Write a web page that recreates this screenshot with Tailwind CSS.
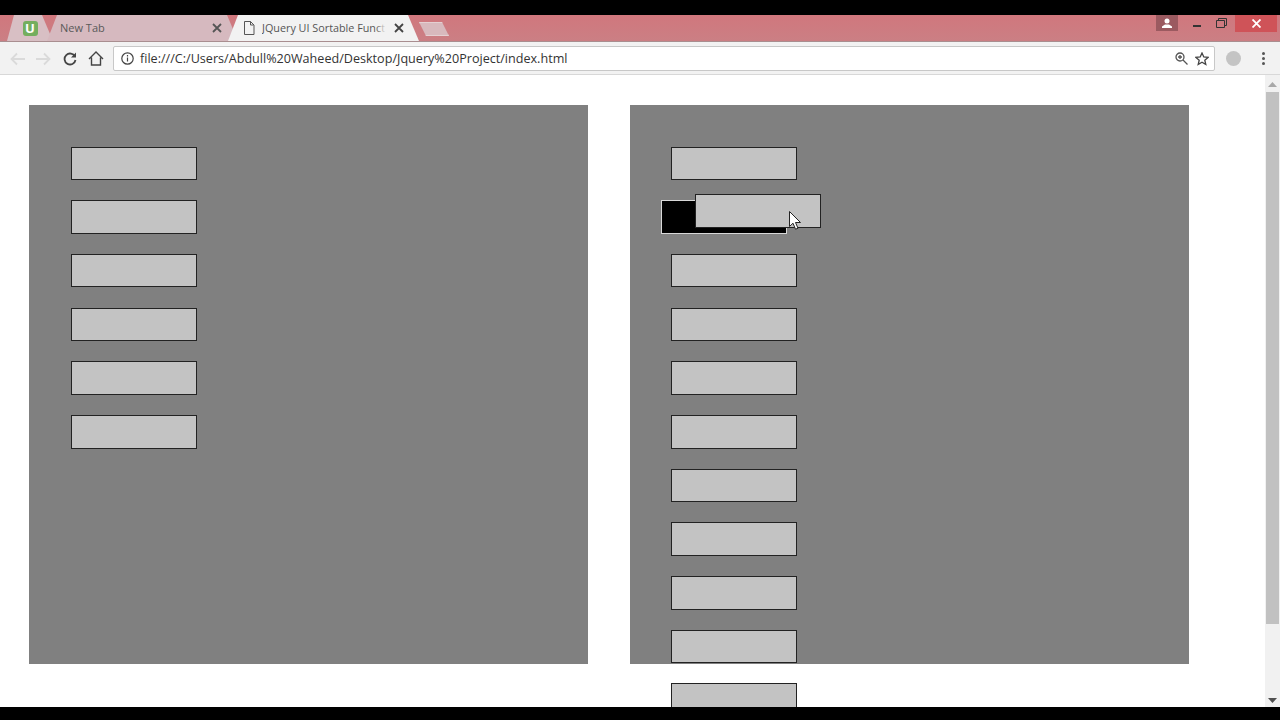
<!DOCTYPE html>
<html><head><meta charset="utf-8">
<script src="https://cdn.jsdelivr.net/npm/@tailwindcss/browser@4"></script>
</head>
<body class="bg-black">
<div class="w-[1280px] h-[720px] flex flex-col overflow-hidden bg-black font-['Open_Sans','Liberation_Sans',sans-serif]">
  <div class="h-[15px] shrink-0 bg-black"></div>
  <!-- tab strip -->
  <div class="h-[26px] shrink-0 relative flex items-stretch bg-gradient-to-b from-[#d0777d] to-[#cb7f84] pl-[7px]">
    <div class="w-[46px] flex items-center justify-center bg-[#d8bfc4] [clip-path:polygon(7px_0,35px_0,46px_100%,0_100%)]">
      <div class="w-[15px] h-[15px] rounded-[3px] bg-[#74ae5e] flex items-center justify-center text-white text-[13px] font-bold leading-none">U</div>
    </div>
    <div class="w-[191px] ml-[-6px] flex items-center bg-[#d6b9bf] [clip-path:polygon(10px_0,180px_0,191px_100%,0_100%)] pl-[13px] text-[11px] text-[#5a5a5a]">
      <span>New Tab</span>
    </div>
    <div class="w-[191px] ml-[-10px] flex items-center bg-[#f2f2f2] [clip-path:polygon(10px_0,180px_0,191px_100%,0_100%)] pl-[15px] text-[10.800px] text-[#555]">
      <svg class="w-[12px] h-[14px] shrink-0" viewBox="0 0 12 14" fill="none" stroke="#555" stroke-width="1"><path d="M1.5 .5h6l3.500 3.500v9.500h-9.500z M7.500 .5v3.500h3"/></svg>
      <div class="relative ml-[7px] w-[124px] overflow-hidden whitespace-nowrap">JQuery UI Sortable Funct
        <div class="absolute right-0 inset-y-0 w-[10px] bg-gradient-to-r from-transparent to-[#f2f2f2]"></div>
      </div>
    </div>
    <div class="mt-[7px] h-[14px] w-[30px] bg-[#d8b9bd] border border-[#e4d0d2] [clip-path:polygon(0_0,23px_0,30px_100%,7px_100%)]"></div>
    <!-- close x of the tabs sit over the strip -->
    <svg class="absolute left-[212px] top-[8px] w-[10px] h-[10px]" viewBox="0 0 10 10" stroke="#555" stroke-width="1.800"><path d="M1 1l8 8M9 1l-8 8"/></svg>
    <svg class="absolute left-[394px] top-[8px] w-[10px] h-[10px]" viewBox="0 0 10 10" stroke="#444" stroke-width="1.800"><path d="M1 1l8 8M9 1l-8 8"/></svg>
    <!-- window controls -->
    <div class="absolute right-[102px] top-0 w-[22px] h-[16px] bg-[#9b5a60] flex items-center justify-center">
      <svg class="w-[10px] h-[10px]" viewBox="0 0 10 10" fill="#fff"><circle cx="5" cy="3" r="2.500"/><path d="M0 10V8.500L3 6.500h4l3 2V10z"/></svg>
    </div>
    <svg class="absolute left-[1193px] top-[9px] w-[8px] h-[3px]" viewBox="0 0 8 3"><path d="M0 1h8v2H0z" fill="#333"/></svg>
    <svg class="absolute left-[1216px] top-[3px] w-[11px] h-[10px]" viewBox="0 0 11 10" fill="none" stroke="#333"><path d="M.5 2.500h8v7h-8zM2.500 2.500v-2h8v7h-2"/></svg>
    <div class="absolute left-[1235px] top-0 w-[42px] h-[17px] bg-[#cf5358] flex items-center justify-center">
      <svg class="w-[9px] h-[9px]" viewBox="0 0 9 9" stroke="#fff" stroke-width="1.800"><path d="M.5.5l8 8M8.500.5l-8 8"/></svg>
    </div>
  </div>
  <!-- toolbar -->
  <div class="h-[34px] shrink-0 flex items-center bg-[#f2f2f2] border-t border-[#a98e90] border-b-[#d8d8d8] border-b pl-[10px] pt-[1px]">
    <svg class="w-[16px] h-[14px]" viewBox="0 0 16 14" fill="none" stroke="#dadada" stroke-width="1.800"><path d="M15 7H2M7 1.500L1.500 7 7 12.500"/></svg>
    <svg class="w-[16px] h-[14px] ml-[9px]" viewBox="0 0 16 14" fill="none" stroke="#dadada" stroke-width="1.800"><path d="M1 7h13M9 1.500L14.500 7 9 12.500"/></svg>
    <svg class="w-[14px] h-[14px] ml-[12px]" viewBox="0 0 14 14" fill="none" stroke="#444" stroke-width="1.800"><path d="M12 4.500A5.500 5.500 0 1 0 12.500 8"/><path d="M13 .5v5H8z" fill="#444" stroke="none"/></svg>
    <svg class="w-[16px] h-[15px] ml-[11px]" viewBox="0 0 16 15" fill="none" stroke="#444" stroke-width="1.400"><path d="M1 8l7-7 7 7M3.500 6.500V14h9V6.500"/></svg>
    <div class="ml-[9px] w-[1102px] h-[25px] bg-white border border-[#c8c8c8] rounded-[2px] flex items-center pl-[7px] pr-[5px]">
      <svg class="w-[13px] h-[13px] shrink-0" viewBox="0 0 13 13" fill="none" stroke="#444" stroke-width="1.200"><circle cx="6.500" cy="6.500" r="5.700"/><path d="M6.500 5.500v4M6.500 3v1.500"/></svg>
      <span class="ml-[6px] pt-[1px] text-[12.600px] text-[#333] whitespace-nowrap">file:///C:/Users/Abdull%20Waheed/Desktop/Jquery%20Project/index.html</span>
      <svg class="w-[13px] h-[13px] ml-auto" viewBox="0 0 13 13" fill="none" stroke="#555" stroke-width="1.300"><circle cx="5" cy="5" r="4"/><path d="M8 8l4.500 4.500M3 5h4M5 3v4"/></svg>
      <svg class="w-[14px] h-[14px] ml-[7px]" viewBox="0 0 14 14" fill="none" stroke="#444" stroke-width="1.300"><path d="M7 1l1.800 4 4.200.4-3.200 2.800 1 4.300L7 10.300 3.200 12.500l1-4.300L1 5.400 5.200 5z"/></svg>
    </div>
    <div class="ml-[11px] w-[15px] h-[15px] rounded-full bg-[#c4c4c4]"></div>
    <div class="ml-[21px] flex flex-col gap-[2px]">
      <div class="w-[3px] h-[3px] rounded-full bg-[#555]"></div>
      <div class="w-[3px] h-[3px] rounded-full bg-[#555]"></div>
      <div class="w-[3px] h-[3px] rounded-full bg-[#555]"></div>
    </div>
  </div>
  <!-- page -->
  <div class="flex-1 relative overflow-hidden bg-white flex">
    <div class="w-[1265px] flex items-start gap-[41.500px] pl-[29px] pt-[30px]">
      <div class="w-[559px] h-[559px] shrink-0 bg-[#808080] pl-[42px] pt-[41.500px] flex flex-col gap-[20.100px]">
        <div class="w-[126px] h-[33.600px] shrink-0 bg-[#c3c3c3] border border-[#222]"></div>
        <div class="w-[126px] h-[33.600px] shrink-0 bg-[#c3c3c3] border border-[#222]"></div>
        <div class="w-[126px] h-[33.600px] shrink-0 bg-[#c3c3c3] border border-[#222]"></div>
        <div class="w-[126px] h-[33.600px] shrink-0 bg-[#c3c3c3] border border-[#222]"></div>
        <div class="w-[126px] h-[33.600px] shrink-0 bg-[#c3c3c3] border border-[#222]"></div>
        <div class="w-[126px] h-[33.600px] shrink-0 bg-[#c3c3c3] border border-[#222]"></div>
      </div>
      <div class="w-[559.500px] h-[559px] shrink-0 bg-[#808080] pl-[41.500px] pt-[41.500px] flex flex-col gap-[20.100px]">
        <div class="w-[126px] h-[33.600px] shrink-0 bg-[#c3c3c3] border border-[#222]"></div>
        <div class="w-[126px] h-[33.600px] shrink-0 ml-[-10px] bg-black border border-[#d8d8d8]"></div>
        <div class="w-[126px] h-[33.600px] shrink-0 bg-[#c3c3c3] border border-[#222]"></div>
        <div class="w-[126px] h-[33.600px] shrink-0 bg-[#c3c3c3] border border-[#222]"></div>
        <div class="w-[126px] h-[33.600px] shrink-0 bg-[#c3c3c3] border border-[#222]"></div>
        <div class="w-[126px] h-[33.600px] shrink-0 bg-[#c3c3c3] border border-[#222]"></div>
        <div class="w-[126px] h-[33.600px] shrink-0 bg-[#c3c3c3] border border-[#222]"></div>
        <div class="w-[126px] h-[33.600px] shrink-0 bg-[#c3c3c3] border border-[#222]"></div>
        <div class="w-[126px] h-[33.600px] shrink-0 bg-[#c3c3c3] border border-[#222]"></div>
        <div class="w-[126px] h-[33.600px] shrink-0 bg-[#c3c3c3] border border-[#222]"></div>
        <div class="w-[126px] h-[33.600px] shrink-0 bg-[#c3c3c3] border border-[#222]"></div>
      </div>
    </div>
    <!-- dragged item and cursor -->
    <div class="absolute left-[695px] top-[119px] w-[126px] h-[33.600px] bg-[#c3c3c3] border border-[#222]"></div>
    <svg class="absolute left-[789px] top-[136px] w-[12px] h-[19px]" viewBox="0 0 12 19"><path d="M.5.500v15l3.500-3.300 2.500 6 2.500-1-2.500-5.700h5z" fill="#fff" stroke="#222" stroke-width="1"/></svg>
    <!-- scrollbar -->
    <div class="w-[15px] shrink-0 ml-auto bg-[#f1f1f1] flex flex-col items-center">
      <svg class="w-[9px] h-[5px] mt-[7px]" viewBox="0 0 9 5"><path d="M4.500 0l4.500 5H0z" fill="#a8a8a8"/></svg>
      <div class="w-[13px] h-[532px] mt-[5px] bg-[#c1c1c1]"></div>
      <svg class="w-[9px] h-[5px] mt-auto mb-[4px]" viewBox="0 0 9 5"><path d="M4.500 5L9 0H0z" fill="#505050"/></svg>
    </div>
  </div>
  <div class="h-[13px] shrink-0 bg-black"></div>
</div>
</body></html>
